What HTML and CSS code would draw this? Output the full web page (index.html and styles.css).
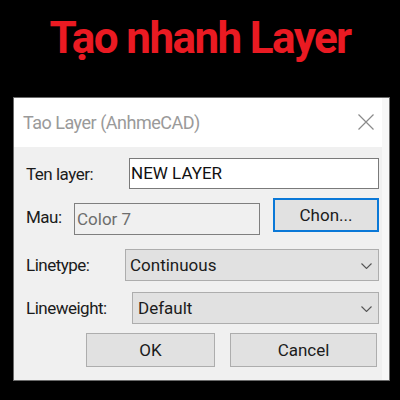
FILE: index.html
```html
<!DOCTYPE html>
<html lang="vi">
<head>
<meta charset="utf-8">
<title>Tạo nhanh Layer</title>
<link rel="stylesheet" href="styles.css">
</head>
<body>
  <header class="banner">
    <h1 class="banner-title">Tạo nhanh Layer</h1>
  </header>
  <div class="dialog">
    <div class="titlebar">
      <span class="titlebar-text">Tao Layer (AnhmeCAD)</span>
      <svg class="close-icon" width="16" height="16" viewBox="0 0 16 16" aria-hidden="true">
        <path d="M0.5 0.5 L15.5 15.5 M15.5 0.5 L0.5 15.5" stroke="#8a8a8a" stroke-width="1.2" fill="none"/>
      </svg>
    </div>
    <div class="dialog-body">
      <div class="row row-name">
        <span class="label">Ten layer:</span>
        <div class="textbox">NEW LAYER</div>
      </div>
      <div class="row row-color">
        <span class="label">Mau:</span>
        <div class="readonly">Color 7</div>
        <div class="btn btn-focus">Chon...</div>
      </div>
      <div class="row row-linetype">
        <span class="label">Linetype:</span>
        <div class="combo combo-linetype">
          <span>Continuous</span>
          <svg class="chevron" width="11" height="6" viewBox="0 0 11 6" aria-hidden="true"><path d="M0.5 0.5 L5.5 5.5 L10.5 0.5" stroke="#555" stroke-width="1.1" fill="none"/></svg>
        </div>
      </div>
      <div class="row row-lineweight">
        <span class="label">Lineweight:</span>
        <div class="combo combo-lineweight">
          <span>Default</span>
          <svg class="chevron" width="11" height="6" viewBox="0 0 11 6" aria-hidden="true"><path d="M0.5 0.5 L5.5 5.5 L10.5 0.5" stroke="#555" stroke-width="1.1" fill="none"/></svg>
        </div>
      </div>
      <div class="row row-actions">
        <div class="btn btn-ok">OK</div>
        <div class="btn btn-cancel">Cancel</div>
      </div>
    </div>
  </div>
</body>
</html>
```

FILE: styles.css
```css
html, body {
  margin: 0;
  padding: 0;
  background: #000;
}

body {
  width: 400px;
  height: 400px;
  overflow: hidden;
  font-family: Roboto, "Liberation Sans", sans-serif;
}

.banner {
  height: 97px;
  box-sizing: border-box;
  padding-top: 16px;
  text-align: center;
}

.banner-title {
  margin: 0;
  font-size: 44px;
  line-height: 44px;
  font-weight: 700;
  letter-spacing: -1.6px;
  color: #ea1a22;
}

.dialog {
  margin-left: 13px;
  width: 377px;
  height: 284px;
  box-sizing: border-box;
  border: 1px solid #6a6a6a;
  padding-right: 7px;
  background: #f7f7f7;
  display: flex;
  flex-direction: column;
}

.titlebar {
  height: 49px;
  background: #fff;
  display: flex;
  align-items: center;
  padding: 0 8px 0 9px;
}

.titlebar-text {
  font-size: 18px;
  letter-spacing: -0.5px;
  color: #9a9a9a;
  flex: 1;
}

.close-icon {
  margin-top: -2px;
}

.dialog-body {
  flex: 1;
  background: #f0f0f0;
  padding: 11px 3px 0 12px;
  display: flex;
  flex-direction: column;
}

.row {
  display: flex;
  align-items: center;
}

.label {
  font-size: 17px;
  letter-spacing: -0.5px;
  color: #1b1b1b;
}

.row-name {
  height: 31px;
}

.textbox {
  margin-left: auto;
  width: 250px;
  height: 31px;
  box-sizing: border-box;
  border: 1px solid #7a7a7a;
  background: #fff;
  padding-left: 1px;
  font-size: 17px;
  line-height: 29px;
  color: #111;
}

.row-color {
  margin-top: 9px;
  height: 37px;
}

.readonly {
  margin-left: auto;
  align-self: flex-end;
  width: 186px;
  height: 32px;
  box-sizing: border-box;
  border: 1px solid #7f7f7f;
  background: #f0f0f0;
  padding-left: 2px;
  font-size: 17px;
  line-height: 30px;
  color: #6d6d6d;
}

.btn {
  box-sizing: border-box;
  height: 34px;
  border: 1px solid #adadad;
  background: #e1e1e1;
  font-size: 17px;
  color: #1b1b1b;
  display: flex;
  align-items: center;
  justify-content: center;
}

.btn-focus {
  align-self: flex-start;
  margin-left: 13px;
  width: 106px;
  border: 2px solid #0a78d7;
}

.row-linetype {
  margin-top: 14px;
}

.row-lineweight {
  margin-top: 11px;
}

.combo {
  margin-left: auto;
  height: 32px;
  box-sizing: border-box;
  border: 1px solid #adadad;
  background: #e1e1e1;
  font-size: 17px;
  color: #1b1b1b;
  display: flex;
  align-items: center;
  justify-content: space-between;
  padding: 0 6px 0 4px;
}

.combo-linetype {
  width: 254px;
}

.combo-lineweight {
  width: 247px;
  padding-left: 5px;
}

.chevron {
  margin-top: 1px;
}

.row-actions {
  margin-top: 9px;
  justify-content: flex-end;
  gap: 15px;
  padding-right: 2px;
}

.btn-ok {
  width: 129px;
}

.btn-cancel {
  width: 147px;
}
```
